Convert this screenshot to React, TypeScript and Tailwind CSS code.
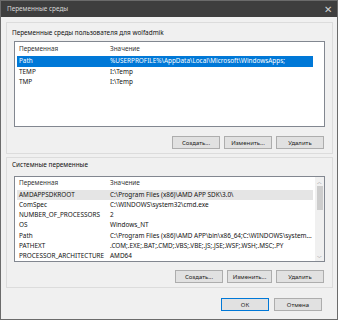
import React from 'react';

const font = { fontFamily: '"Noto Sans", "Liberation Sans", sans-serif' };

const userVars = [
    ['Path', '%USERPROFILE%\\AppData\\Local\\Microsoft\\WindowsApps;'],
    ['TEMP', 'I:\\Temp'],
    ['TMP', 'I:\\Temp'],
];

const sysVars = [
    ['AMDAPPSDKROOT', 'C:\\Program Files (x86)\\AMD APP SDK\\3.0\\'],
    ['ComSpec', 'C:\\WINDOWS\\system32\\cmd.exe'],
    ['NUMBER_OF_PROCESSORS', '2'],
    ['OS', 'Windows_NT'],
    ['Path', 'C:\\Program Files (x86)\\AMD APP\\bin\\x86_64;C:\\WINDOWS\\system...'],
    ['PATHEXT', '.COM;.EXE;.BAT;.CMD;.VBS;.VBE;.JS;.JSE;.WSF;.WSH;.MSC;.PY'],
    ['PROCESSOR_ARCHITECTURE', 'AMD64'],
];

const Btn: React.FC<{ label: string; primary?: boolean; w?: string }> = ({ label, primary, w = 'w-[48px]' }) => (
    <div className={`${w} h-[13px] flex items-center justify-center bg-[#e1e1e1] text-[6px] leading-[10px] text-[#222] border ${primary ? 'border-[#0078d7]' : 'border-[#adadad]'}`}>
        {label}
    </div>
);

const Row: React.FC<{ name: string; value: string; selected?: boolean; hover?: boolean }> = ({ name, value, selected, hover }) => (
    <div className={`flex items-center h-[10.5px] leading-[10px] w-[296px] ml-[2px] whitespace-nowrap ${selected ? 'bg-[#0078d7] text-white' : hover ? 'bg-[#e5e5e5] text-[#111]' : 'text-[#111]'}`}>
        <span className="w-[93px] pl-[2px] shrink-0">{name}</span>
        <span>{value}</span>
    </div>
);

export default function App() {
    return (
        <div className="w-[338px] h-[320px] bg-[#f0f0f0] flex flex-col border border-[#6b6b6b] text-[6.4px] leading-[10px]" style={font}>
            <div className="h-[16px] bg-[#3e3e3e] flex items-center justify-between pl-[6px] pr-[5px] shrink-0">
                <span className="text-[#d8d8d8] text-[6.4px]">Переменные среды</span>
                <span className="text-[#d0d0d0] text-[10px] leading-[12px] font-light">✕</span>
            </div>

            <div className="mt-[5px] ml-[5px] w-[327px] border border-[#dcdcdc] pt-[5px] pb-[4px] flex flex-col">
                <div className="pl-[5px] h-[10px] flex items-center text-[#111]">Переменные среды пользователя для wolfadmik</div>
                <div className="mt-[3px] ml-[7px] w-[311px] h-[86px] bg-white border border-[#828790] flex flex-col">
                    <div className="flex items-center h-[14px] text-[#333] ml-[2px]">
                        <span className="w-[93px] pl-[2px]">Переменная</span>
                        <span>Значение</span>
                    </div>
                    {userVars.map(([n, v], i) => (
                        <Row key={n} name={n} value={v} selected={i === 0} />
                    ))}
                </div>
                <div className="mt-[9px] pr-[8px] flex justify-end gap-[4px]">
                    <Btn label="Создать..." />
                    <Btn label="Изменить..." />
                    <Btn label="Удалить" />
                </div>
            </div>

            <div className="mt-[3px] ml-[5px] w-[327px] border border-[#dcdcdc] pt-[2px] pb-[4px] flex flex-col">
                <div className="pl-[5px] h-[10px] flex items-center text-[#111]">Системные переменные</div>
                <div className="mt-[6px] ml-[7px] w-[311px] h-[86px] bg-white border border-[#828790] flex">
                    <div className="flex-1 flex flex-col">
                        <div className="flex items-center h-[13px] text-[#333] ml-[2px]">
                            <span className="w-[93px] pl-[2px]">Переменная</span>
                            <span>Значение</span>
                        </div>
                        {sysVars.map(([n, v], i) => (
                            <Row key={n + i} name={n} value={v} hover={i === 0} />
                        ))}
                    </div>
                    <div className="w-[9px] bg-[#f0f0f0] flex flex-col items-center">
                        <span className="h-[9px] flex items-center text-[5px] text-[#606060]">︿</span>
                        <div className="w-[6px] h-[24px] bg-[#cdcdcd]" />
                        <div className="flex-1" />
                        <span className="h-[9px] flex items-center text-[5px] text-[#606060]">﹀</span>
                    </div>
                </div>
                <div className="mt-[8px] pr-[8px] flex justify-end gap-[4px]">
                    <Btn label="Создать..." />
                    <Btn label="Изменить..." w="w-[45px]" />
                    <Btn label="Удалить" />
                </div>
            </div>

            <div className="mt-[10px] pr-[15px] flex justify-end gap-[5px]">
                <Btn label="ОК" primary />
                <Btn label="Отмена" />
            </div>
        </div>
    );
}
